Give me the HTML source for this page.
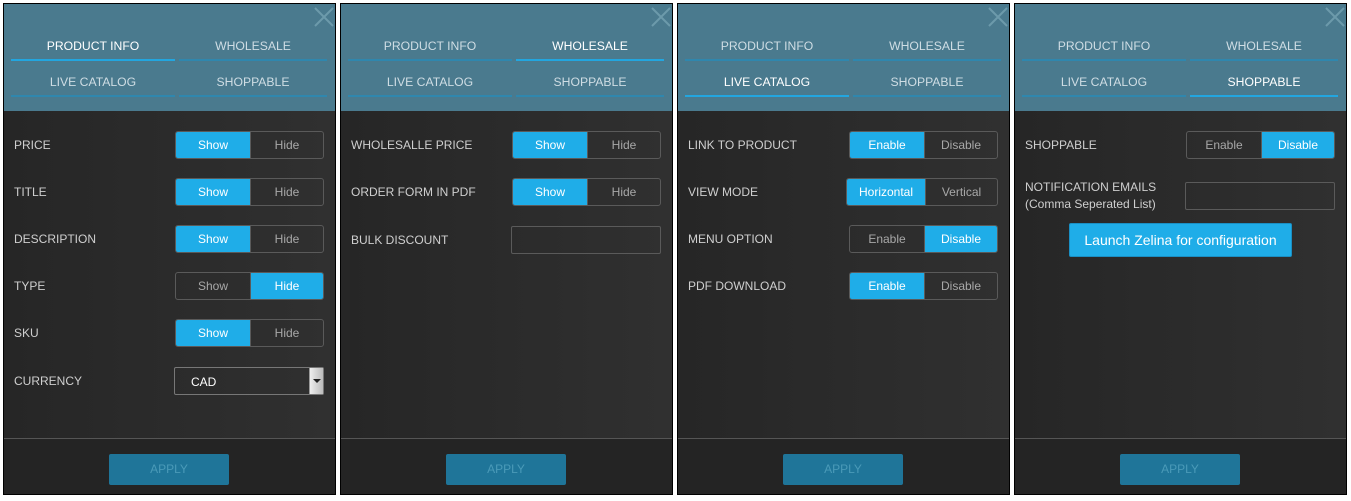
<!DOCTYPE html><html><head><style>
*{margin:0;padding:0;box-sizing:border-box}
body{width:1351px;height:501px;background:#fff;position:relative;overflow:hidden;font-family:"Liberation Sans",sans-serif}
.p{position:absolute;top:3px;width:333px;height:492px;border:1px solid #000;background:linear-gradient(90deg,#262626,#303030);overflow:hidden}
.hd{position:absolute;left:0;top:0;right:0;height:107px;background:#4a7a8e}
.t{position:absolute;height:32px;padding-top:2px;line-height:30px;text-align:center;font-size:12.2px;color:#cfdde4;border-bottom:2px solid #2f87ae;overflow:visible}
.t.a{color:#fff;border-bottom-color:#22a6e0}
.x{position:absolute;left:309px;top:2px}
.l{position:absolute;left:10px;font-size:12px;color:#cfcfcf}
.g{position:absolute;left:171px;width:149px;height:28px;border:1px solid #5a5a5a;border-radius:3px;display:flex;overflow:hidden;font-size:12px}
.g span{flex:0 0 74px;text-align:center;line-height:26px;color:#a8a8a8}
.g span+span{flex:1;border-left:1px solid #5a5a5a}
.g span.on{background:#1fade8;color:#fff}
.in{position:absolute;left:170px;width:150px;height:28px;border:1px solid #5a5a5a;border-radius:2px}
.dv{position:absolute;left:0;right:0;top:434px;height:1px;background:#555}
.ft{position:absolute;left:0;right:0;top:435px;bottom:0;background:#242424}
.ap{position:absolute;left:105px;top:450px;width:120px;height:31px;background:#1f7599;border-radius:2px;color:#4a9ab8;font-size:12px;text-align:center;line-height:31px}
</style></head><body>

<div class="p" style="left:3px">
<div class="hd">
<svg class="x" width="22" height="22"><path d="M2 2L20 20M20 2L2 20" stroke="#6c9aab" stroke-width="2"/></svg>
<div class="t a" style="left:7px;top:25px;width:164px">PRODUCT INFO</div>
<div class="t" style="left:175px;top:25px;width:148px">WHOLESALE</div>
<div class="t" style="left:7px;top:61px;width:164px">LIVE CATALOG</div>
<div class="t" style="left:175px;top:61px;width:148px">SHOPPABLE</div>
</div>
<div class="l" style="top:134px">PRICE</div><div class="g" style="top:127px"><span class="on">Show</span><span>Hide</span></div>
<div class="l" style="top:181px">TITLE</div><div class="g" style="top:174px"><span class="on">Show</span><span>Hide</span></div>
<div class="l" style="top:228px">DESCRIPTION</div><div class="g" style="top:221px"><span class="on">Show</span><span>Hide</span></div>
<div class="l" style="top:275px">TYPE</div><div class="g" style="top:268px"><span>Show</span><span class="on">Hide</span></div>
<div class="l" style="top:322px">SKU</div><div class="g" style="top:315px"><span class="on">Show</span><span>Hide</span></div>
<div class="l" style="top:370px">CURRENCY</div>
<div class="in" style="top:363px;border-color:#777"><span style="position:absolute;left:16px;top:7px;color:#fff;font-size:12px">CAD</span><div style="position:absolute;right:0;top:0;width:14px;height:26px;background:linear-gradient(90deg,#eee,#bbb);border-left:1px solid #999"><div style="position:absolute;left:3px;top:11px;border:4px solid transparent;border-top:4px solid #222;border-bottom:0"></div></div></div>
<div class="dv"></div><div class="ft"></div><div class="ap">APPLY</div>
</div>

<div class="p" style="left:340px">
<div class="hd">
<svg class="x" width="22" height="22"><path d="M2 2L20 20M20 2L2 20" stroke="#6c9aab" stroke-width="2"/></svg>
<div class="t" style="left:7px;top:25px;width:164px">PRODUCT INFO</div>
<div class="t a" style="left:175px;top:25px;width:148px">WHOLESALE</div>
<div class="t" style="left:7px;top:61px;width:164px">LIVE CATALOG</div>
<div class="t" style="left:175px;top:61px;width:148px">SHOPPABLE</div>
</div>
<div class="l" style="top:134px">WHOLESALLE PRICE</div><div class="g" style="top:127px"><span class="on">Show</span><span>Hide</span></div>
<div class="l" style="top:181px">ORDER FORM IN PDF</div><div class="g" style="top:174px"><span class="on">Show</span><span>Hide</span></div>
<div class="l" style="top:229px">BULK DISCOUNT</div><div class="in" style="top:222px"></div>
<div class="dv"></div><div class="ft"></div><div class="ap">APPLY</div>
</div>

<div class="p" style="left:677px">
<div class="hd">
<svg class="x" width="22" height="22"><path d="M2 2L20 20M20 2L2 20" stroke="#6c9aab" stroke-width="2"/></svg>
<div class="t" style="left:7px;top:25px;width:164px">PRODUCT INFO</div>
<div class="t" style="left:175px;top:25px;width:148px">WHOLESALE</div>
<div class="t a" style="left:7px;top:61px;width:164px">LIVE CATALOG</div>
<div class="t" style="left:175px;top:61px;width:148px">SHOPPABLE</div>
</div>
<div class="l" style="top:134px">LINK TO PRODUCT</div><div class="g" style="top:127px"><span class="on">Enable</span><span>Disable</span></div>
<div class="l" style="top:181px">VIEW MODE</div><div class="g" style="top:174px;left:168px;width:152px"><span class="on" style="flex-basis:78px">Horizontal</span><span>Vertical</span></div>
<div class="l" style="top:228px">MENU OPTION</div><div class="g" style="top:221px"><span>Enable</span><span class="on">Disable</span></div>
<div class="l" style="top:275px">PDF DOWNLOAD</div><div class="g" style="top:268px"><span class="on">Enable</span><span>Disable</span></div>
<div class="dv"></div><div class="ft"></div><div class="ap">APPLY</div>
</div>

<div class="p" style="left:1014px">
<div class="hd">
<svg class="x" width="22" height="22"><path d="M2 2L20 20M20 2L2 20" stroke="#6c9aab" stroke-width="2"/></svg>
<div class="t" style="left:7px;top:25px;width:164px">PRODUCT INFO</div>
<div class="t" style="left:175px;top:25px;width:148px">WHOLESALE</div>
<div class="t" style="left:7px;top:61px;width:164px">LIVE CATALOG</div>
<div class="t a" style="left:175px;top:61px;width:148px">SHOPPABLE</div>
</div>
<div class="l" style="top:134px">SHOPPABLE</div><div class="g" style="top:127px"><span>Enable</span><span class="on">Disable</span></div>
<div class="l" style="top:176px">NOTIFICATION EMAILS</div>
<div class="l" style="top:193px">(Comma Seperated List)</div>
<div class="in" style="top:178px"></div>
<div style="position:absolute;left:54px;top:219px;width:223px;height:34px;background:#1fade8;border:1px solid #1a8fc4;border-radius:2px;color:#fff;font-size:14px;text-align:center;line-height:32px">Launch Zelina for configuration</div>
<div class="dv"></div><div class="ft"></div><div class="ap">APPLY</div>
</div>
</body></html>
